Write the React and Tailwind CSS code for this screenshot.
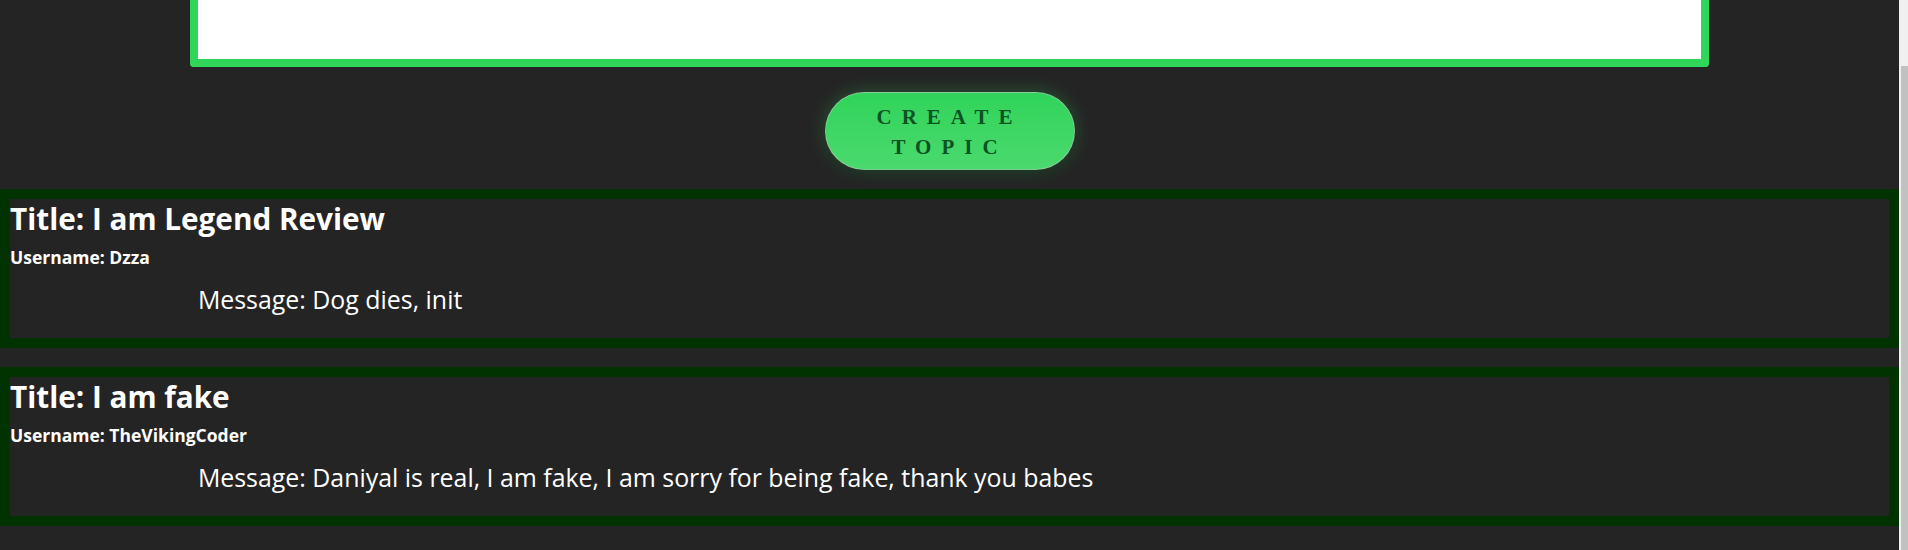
import React from "react";

const topics = [
  { title: "I am Legend Review", username: "Dzza", message: "Dog dies, init" },
  {
    title: "I am fake",
    username: "TheVikingCoder",
    message: "Daniyal is real, I am fake, I am sorry for being fake, thank you babes",
  },
];

function TopicCard({ t }) {
  return (
    <div className="h-[159px] border-[10px] border-[#003300] text-white font-['Open_Sans',sans-serif]">
      <h1 className="text-[29.7px] leading-[40px] font-bold">Title: {t.title}</h1>
      <h4 className="mt-[7px] text-[17.5px] leading-[22px] font-bold">Username: {t.username}</h4>
      <p className="mt-[14px] ml-[10%] text-[24.9px] leading-[34px]">Message: {t.message}</p>
    </div>
  );
}

export default function App() {
  return (
    <div className="flex h-[550px] w-[1908px] overflow-hidden bg-[#242424]">
      <div className="w-[1899px] flex flex-col">
        <div className="mx-auto h-[67px] w-[80%] bg-white border-[8px] border-t-0 border-[#2fd65a] rounded-b-[4px]" />
        <div className="flex justify-center mt-[25px] mb-[19px]">
          <button className="w-[250px] h-[78px] rounded-full border border-[#b4c4b6]/60 bg-gradient-to-b from-[#2fd45a] to-[#4ad96e] shadow-[0_0_18px_rgba(60,200,100,0.35),0_4px_10px_rgba(0,0,0,0.35)] py-[9px] text-center font-['Liberation_Serif',serif] font-bold text-[21px] leading-[30px] tracking-[10px] text-[#0b5323]">
            CREATE
            <br />
            TOPIC
          </button>
        </div>
        <div className="flex flex-col gap-[19px]">
          {topics.map((t, i) => (
            <TopicCard key={i} t={t} />
          ))}
        </div>
      </div>
      <div className="w-[9px] bg-[#f0f0f0] flex flex-col">
        <div className="h-[66px]" />
        <div className="flex-1 ml-[2px] bg-[#c1c1c1]" />
      </div>
    </div>
  );
}
